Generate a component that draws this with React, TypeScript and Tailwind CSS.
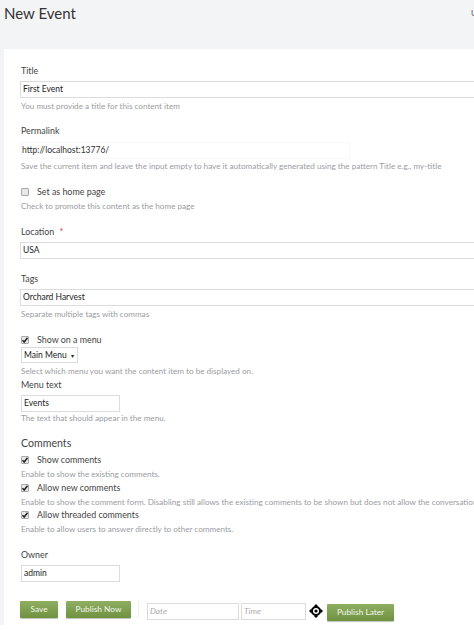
const font = "font-['Lato','Open_Sans',sans-serif]";

function Help({ children, className = "" }: { children: React.ReactNode; className?: string }) {
  return <p className={`h-[14px] text-[8.15px] leading-[14px] whitespace-nowrap text-[#9a9d9f] ${className}`}>{children}</p>;
}

function Label({ children, className = "" }: { children: React.ReactNode; className?: string }) {
  return <label className={`block h-[14px] text-[8.9px] leading-[14px] text-[#444] ${className}`}>{children}</label>;
}

function Check({ label, checked = true, className = "" }: { label: string; checked?: boolean; className?: string }) {
  return (
    <div className={`flex h-[14px] items-center ${className}`}>
      <span className="flex h-[8px] w-[8px] items-center justify-center rounded-[1px] border border-[#a9a9a9] bg-[#e8e8e8]">
        {checked && (
          <svg viewBox="0 0 8 8" className="h-[8px] w-[8px] shrink-0">
            <path d="M1.5 4.2 L3.2 6 L6.5 1.8" fill="none" stroke="#222" strokeWidth="1.5" />
          </svg>
        )}
      </span>
      <span className="ml-[8px] text-[8.9px] leading-[14px] text-[#444]">{label}</span>
    </div>
  );
}

function WideInput({ value, className = "" }: { value: string; className?: string }) {
  return (
    <div className={`ml-[-1px] flex h-[17px] w-[470px] items-center border border-[#dcdcdc] bg-white pl-[2px] text-[8.5px] text-[#222] ${className}`}>
      {value}
    </div>
  );
}

function SmallInput({ value, className = "" }: { value: string; className?: string }) {
  return (
    <div className={`flex h-[17px] w-[99px] items-center border border-[#dcdcdc] bg-white pl-[2px] text-[8.5px] text-[#222] ${className}`}>
      {value}
    </div>
  );
}

function GreenButton({ children, className = "" }: { children: React.ReactNode; className?: string }) {
  return (
    <button className={`flex h-[17px] items-center justify-center rounded-[1px] bg-gradient-to-b from-[#8fae62] to-[#6f9240] text-[8.3px] whitespace-nowrap text-[#f4f7ee] shadow-[0_1px_1px_rgba(0,0,0,0.25)] ${className}`}>
      {children}
    </button>
  );
}

export default function App() {
  return (
    <div className={`h-[630px] w-[474px] overflow-hidden bg-white ${font}`}>
      {/* Header band */}
      <div className="relative h-[49px] bg-[#f3f4f6] pl-[4px] pt-[2px]">
        <h1 className="text-[15px] leading-[22px] text-[#333]">New Event</h1>
        <span className="absolute left-[471px] top-[7px] text-[8px] text-[#555]">U</span>
      </div>

      {/* Form panel */}
      <div className="h-[576px] border-l-[4px] border-[#f3f4f6] pl-[17px] pt-[15px]">
        <Label>Title</Label>
        <WideInput value="First Event" className="mt-[3px]" />
        <Help className="mt-[1px]">You must provide a title for this content item</Help>

        <Label className="mt-[11px]">Permalink</Label>
        <div className="mt-[4px] flex h-[17px] w-[329px] items-center border border-[#f7f7f7] text-[8.5px] text-[#333]">http://localhost:13776/</div>
        <Help>Save the current item and leave the input empty to have it automatically generated using the pattern Title e.g., my-title</Help>

        <Check label="Set as home page" checked={false} className="mt-[12px]" />
        <Help>Check to promote this content as the home page</Help>

        <Label className="mt-[12px]">
          Location <span className="ml-[3px] text-[#c0392b]">*</span>
        </Label>
        <WideInput value="USA" className="mt-[3px]" />

        <Label className="mt-[13px]">Tags</Label>
        <WideInput value="Orchard Harvest" className="mt-[3px]" />
        <Help className="mt-[1px]">Separate multiple tags with commas</Help>

        <Check label="Show on a menu" className="mt-[12px]" />
        <div className="flex h-[16px] w-[57px] items-center whitespace-nowrap border border-[#dcdcdc] pl-[2px] text-[8.5px] text-[#222]">
          Main Menu <span className="ml-[4px] text-[6px]">▾</span>
        </div>
        <Help className="mt-[1px]">Select which menu you want the content item to be displayed on.</Help>
        <Label>Menu text</Label>
        <SmallInput value="Events" className="mt-[3px]" />
        <Help className="mt-[-1px]">The text that should appear in the menu.</Help>

        <h2 className="mt-[9px] h-[18px] text-[10.6px] leading-[18px] text-[#444]">Comments</h2>
        <Check label="Show comments" className="mt-[1px]" />
        <Help>Enable to show the existing comments.</Help>
        <Check label="Allow new comments" />
        <Help>Enable to show the comment form. Disabling still allows the existing comments to be shown but does not allow the conversation to continue.</Help>
        <Check label="Allow threaded comments" className="mt-[-1px]" />
        <Help>Enable to allow users to answer directly to other comments.</Help>

        <Label className="mt-[12px]">Owner</Label>
        <SmallInput value="admin" className="mt-[3px]" />

        {/* Publish actions */}
        <div className="ml-[-1px] mt-[19px] flex items-start">
          <GreenButton className="w-[38px]">Save</GreenButton>
          <GreenButton className="ml-[8px] w-[65px]">Publish Now</GreenButton>
          <div className="ml-[7px] h-[17px] w-px bg-[#eee]" />
          <div className="ml-[8px] mt-[2px] flex h-[17px] w-[92px] items-center border border-[#dcdcdc] pl-[2px] text-[8.3px] italic text-[#aaa]">Date</div>
          <div className="ml-[2px] mt-[2px] flex h-[17px] w-[65px] items-center border border-[#dcdcdc] pl-[2px] text-[8.3px] italic text-[#aaa]">Time</div>
          <svg viewBox="0 0 14 14" className="ml-[3px] mt-[3px] h-[14px] w-[14px]">
            <path d="M7 0 L9.5 2.5 H4.5Z M7 14 L4.5 11.5 H9.5Z M0 7 L2.5 4.5 V9.5Z M14 7 L11.5 9.5 V4.5Z" fill="#000" />
            <circle cx="7" cy="7" r="4" fill="none" stroke="#000" strokeWidth="2" />
            <circle cx="7" cy="7" r="1.6" fill="#000" />
          </svg>
          <GreenButton className="ml-[4px] mt-[3px] w-[67px]">Publish Later</GreenButton>
        </div>
      </div>
    </div>
  );
}
